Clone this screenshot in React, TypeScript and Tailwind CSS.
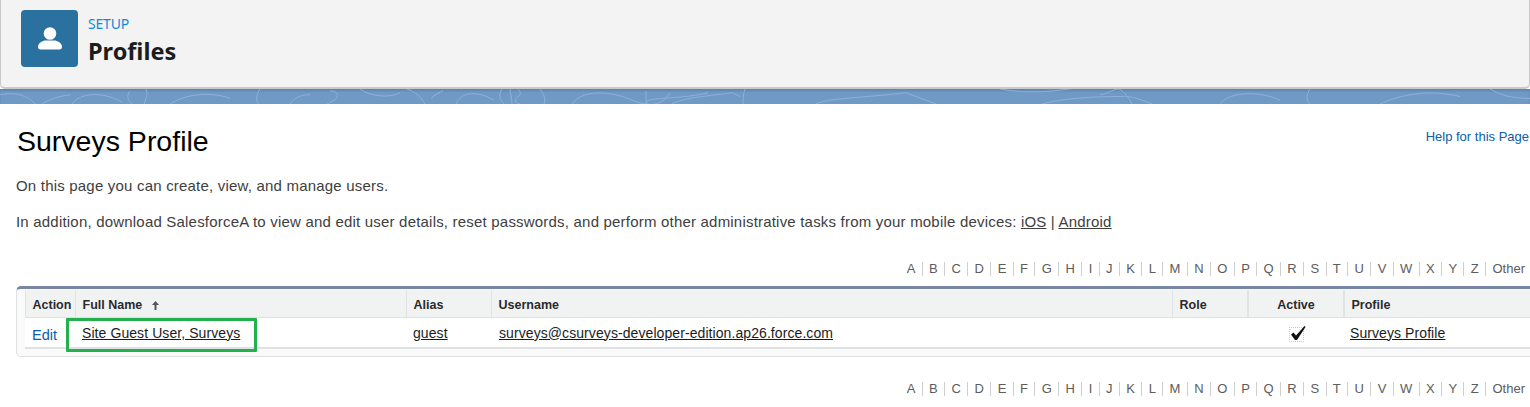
const letters = "ABCDEFGHIJKLMNOPQRSTUVWXYZ".split("");

function AlphaBar({ className }: { className: string }) {
  return (
    <div className={"flex justify-end items-center text-[13px] leading-[14px] text-[#5c5c5c] pr-[5px] " + className}>
      {letters.map((l) => (
        <span key={l} className="flex items-center">
          <span>{l}</span>
          <span className="mx-[6.370px] h-[14px] w-px bg-[#cfcfcf]" />
        </span>
      ))}
      <span>Other</span>
    </div>
  );
}

function Swirls() {
  return (
    <svg className="w-full h-full" viewBox="0 0 1530 16" preserveAspectRatio="none" fill="none" stroke="#8fb2d6" strokeWidth="1">
      <path d="M0 6C20 2 30 10 35 16M70 6c-10 2-20 4-28 10M72 16c8-12 30-14 50-2M130 2c-4 6-2 10 2 14M146 0c2 6 0 10-2 16" />
      <path d="M407 0c8 3 14 8 18 16M431 10c4-4 8-6 12-8M456 16c6-14 22-14 38-4M502 0c-4 6-2 12 2 16M510 0c0 4 2 10 2 16M518 0c2 2 4 6 0 8c-4 2-3 8 2 8" />
      <path d="M540 0c4 6 6 10 4 16M572 16c10-16 40-14 60-4c14 6 30 8 38-8M648 16c-10-8 30-4 60-12M646 16V2M672 16c10-6 30-8 60-12l8 4M745 0c-2 6-2 12-2 16M816 16c10-6 40-6 90-12l30 12" />
      <path d="M1042 16c20-6 50-8 80-8c6 0 12 0 30 8M1100 6c6 0 14-6 18-6s10 8 14 16M1000 0c30 6 60 2 80-2M1220 16c10-14 40-14 60-4M1310 0c-4 6-4 12 0 16M1380 16c20-10 50-16 80-8M1490 0c10 6 20 10 40 10" />
      <path d="M170 16c14-10 40-14 60-6M260 0c-4 6-4 12-2 16M290 16c4-6 10-10 20-10M330 2c8 0 10 6 4 10s-8 4-6 4M360 0c10 8 30 10 40 4" />
    </svg>
  );
}

const cell = "pl-[7px] pr-[5px] pt-[1px] text-[14px] tracking-[0.08px] leading-[15px] flex items-center";
const headText = "text-[12.500px] leading-[15px] font-bold text-[#2b2b2b] border-l border-[#e0e3e5] pt-[3px] ";
const head = headText + "pl-[6.500px] flex items-center";

export default function App() {
  return (
    <div className="w-[1530px] h-[407px] overflow-hidden bg-white font-['Liberation_Sans',Arial,sans-serif] flex flex-col">
      <header className="h-[89px] shrink-0 bg-[#f3f3f3] border border-t-0 border-[#c9c9c9] border-b-2 rounded-b-[5px] flex items-start pl-[20px] pt-[10px] relative z-10">
        <div className="w-[57px] h-[57px] rounded-[4px] bg-[#2b71a0] flex items-center justify-center">
          <svg width="26" height="26" viewBox="0 0 26 26" fill="white">
            <circle cx="13" cy="7.500" r="6.300" />
            <path d="M1 21c0-4.300 5-6.500 7.500-6.500h9c2.500 0 7.500 2.200 7.500 6.500 0 1.500-1 2.500-2.500 2.500h-19C2 23.500 1 22.500 1 21z" />
          </svg>
        </div>
        <div className="ml-[10px] font-['Noto_Sans',sans-serif]">
          <div className="text-[14px] leading-[16px] mt-[6px] text-[#1589d8] tracking-[-0.2px]">SETUP</div>
          <div className="text-[23.500px] leading-[30px] mt-[4px] font-bold text-[#1c1c1c]">Profiles</div>
        </div>
      </header>
      <div className="h-[15px] shrink-0 bg-[#6f9ac6] shadow-[inset_0_2px_2px_rgba(60,90,130,0.3)]">
        <Swirls />
      </div>
      <main className="flex-1 bg-white rounded-t-[5px] ml-px relative">
        <div className="flex justify-between items-start pl-[16px]">
          <h1 className="text-[28.500px] leading-[32px] mt-[21px] text-black">Surveys Profile</h1>
          <a className="text-[13px] leading-[14px] mt-[26px] text-[#0b5cab] mr-[1px]">Help for this Page</a>
        </div>
        <p className="pl-[15px] mt-[21px] text-[15px] tracking-[0.2px] leading-[16px] text-[#3e3e3e]">On this page you can create, view, and manage users.</p>
        <p className="pl-[15px] mt-[20px] text-[15px] tracking-[0.2px] leading-[16px] text-[#3e3e3e]">
          In addition, download SalesforceA to view and edit user details, reset passwords, and perform other administrative tasks from your mobile devices:{" "}
          <span className="underline">iOS</span> | <span className="underline">Android</span>
        </p>
        <AlphaBar className="mt-[32px]" />
        <section className="mt-[10px] ml-[15px] -mr-[10px] h-[71px] rounded-[5px] border border-[#dfe2e5] border-t-[3px] border-t-[#7a86a8] bg-[#fafafa] pl-[8px] pt-[1px] relative">
          <div className="grid grid-cols-[50px_331px_85px_681px_75px_96px_1fr] h-[28px] bg-[#f1f3f3] border-b border-[#dfe2e5]">
            <div className={head}>Action</div>
            <div className={head}>
              Full Name
              <svg className="ml-[10px]" width="7" height="9" viewBox="0 0 7 9" fill="#555"><path d="M3.500 0 7 4H4.500v5h-2V4H0z" /></svg>
            </div>
            <div className={head}>Alias</div>
            <div className={head}>Username</div>
            <div className={head}>Role</div>
            <div className={headText + "flex items-center justify-center border-l-2"}>Active</div>
            <div className={head + " border-l-2"}>Profile</div>
          </div>
          <div className="grid grid-cols-[50px_331px_85px_681px_75px_96px_1fr] h-[31px] bg-white border-b-2 border-[#dfe2e5] text-[#1c1c1c]">
            <div className="pl-[7px] pt-[7px] flex items-center text-[#0b5cab] text-[14.500px]">Edit</div>
            <div className={cell + " pl-[6px]"}><span className="underline">Site Guest User, Surveys</span></div>
            <div className={cell}><span className="underline">guest</span></div>
            <div className={cell + " pl-[8px]"}><span className="underline">surveys@csurveys-developer-edition.ap26.force.com</span></div>
            <div className={cell} />
            <div className={cell + " justify-center"}>
              <span className="relative w-[15px] h-[15px] border border-dotted border-[#c8c8c8] mt-[2px]">
                <svg className="absolute -top-[3px] left-0" width="17" height="17" viewBox="0 0 17 17" fill="#111"><path d="M1 9.500 3.500 7.500 6 10.500 14.500 1 15.500 2 7 15H5z" /></svg>
              </span>
            </div>
            <div className={cell}><span className="underline">Surveys Profile</span></div>
          </div>
          <div className="absolute left-[49px] top-[29px] w-[191px] h-[34px] border-[3px] border-[#22b14c] rounded-[1px]" />
        </section>
        <AlphaBar className="mt-[25px]" />
      </main>
    </div>
  );
}
